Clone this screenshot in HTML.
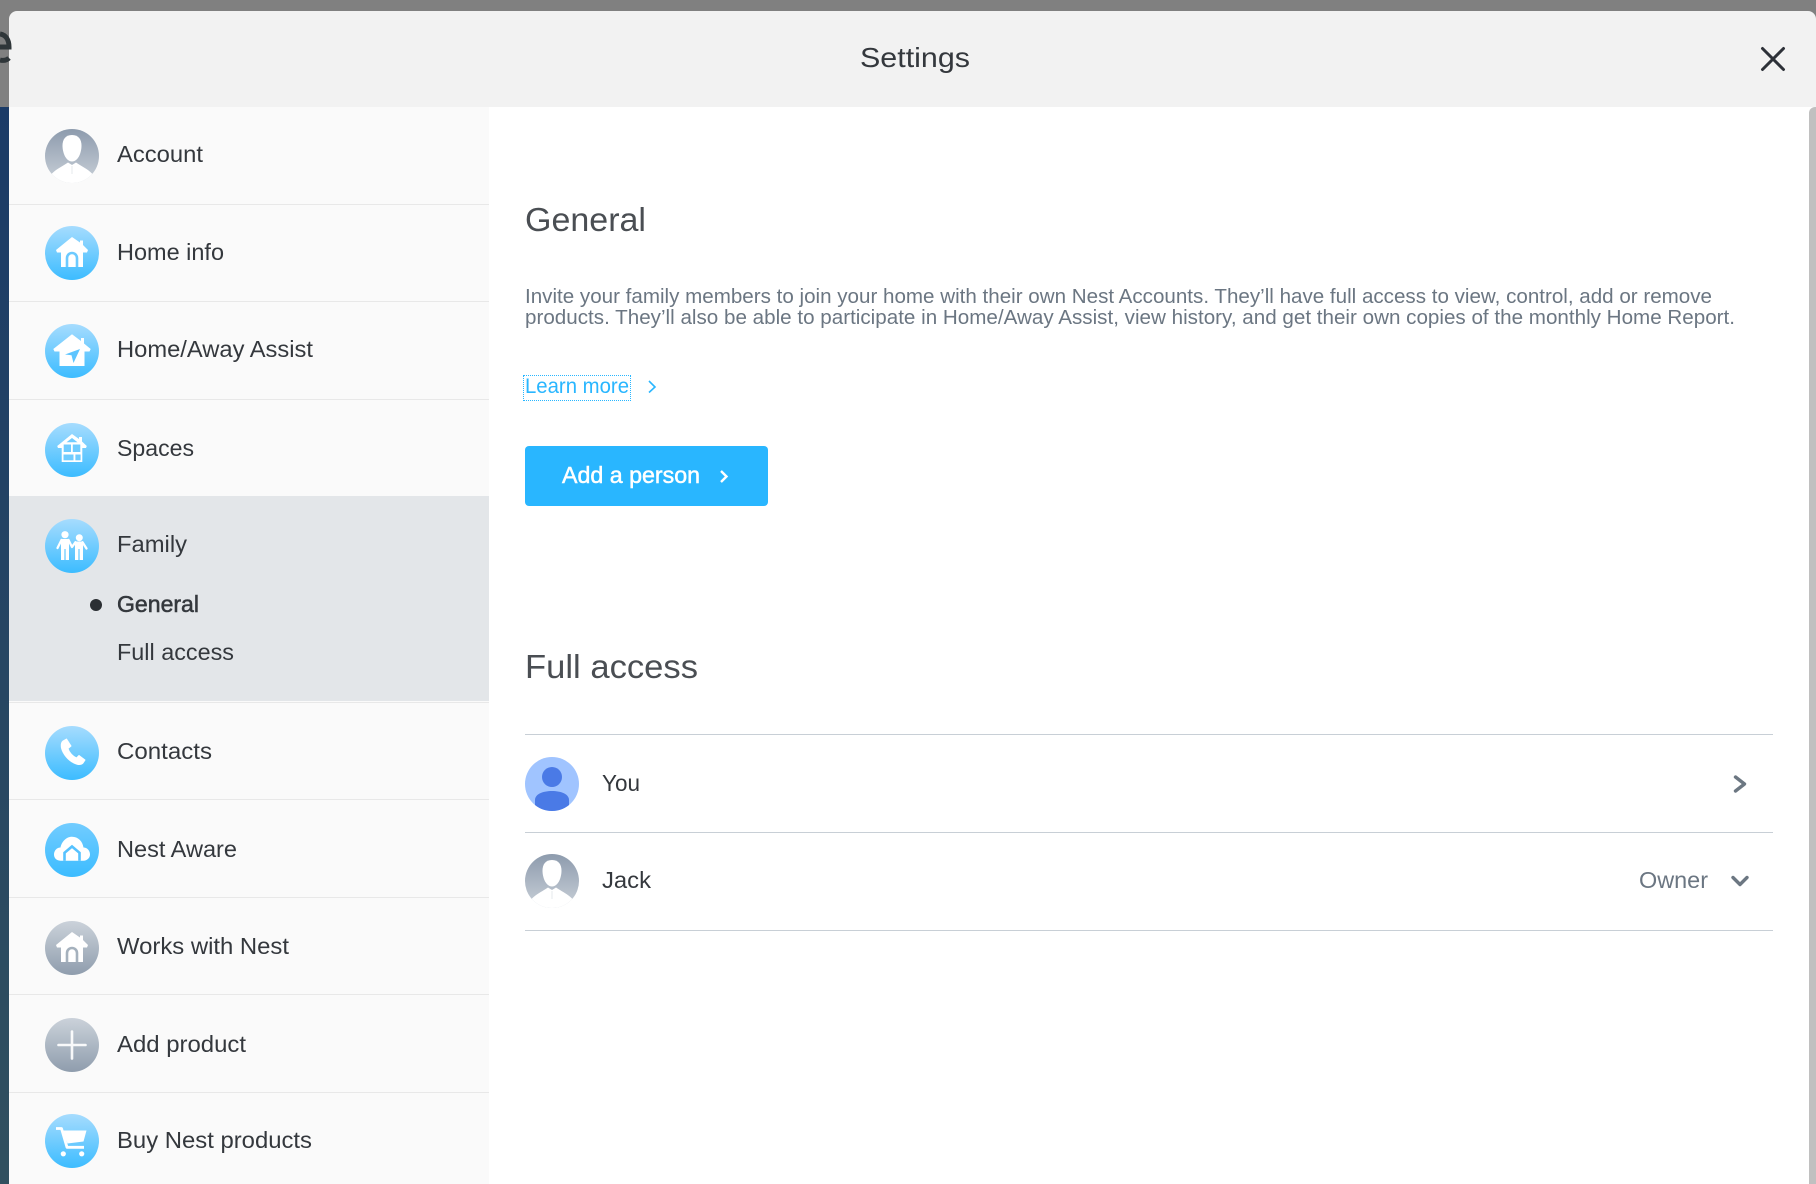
<!DOCTYPE html>
<html lang="en">
<head>
<meta charset="utf-8">
<title>Settings</title>
<style>
html,body{margin:0;padding:0;width:1816px;height:1184px;overflow:hidden;background:#808080}
#stage{position:absolute;left:0;top:0;width:1816px;height:1184px;overflow:hidden}
.abs{position:absolute}
svg text{font-family:"Liberation Sans",sans-serif}
</style>
</head>
<body>
<div id="stage">
  <div class="abs" style="left:0;top:107px;width:9px;height:1077px;background:linear-gradient(#1b3b67,#31505f)"></div>
  <div class="abs" style="left:9px;top:11px;width:1807px;height:96px;background:#f2f2f2;border-radius:8px 8px 0 0"></div>
  <div class="abs" style="left:9px;top:107px;width:1807px;height:1077px;background:#fff"></div>
  <div class="abs" style="left:9px;top:107px;width:480px;height:1077px;background:#fafafa"></div>
  <div class="abs" style="left:9px;top:496px;width:480px;height:205px;background:#e3e6e9"></div>
  <div class="abs" style="left:9px;top:204px;width:480px;height:1px;background:#e8e8e8"></div>
  <div class="abs" style="left:9px;top:301px;width:480px;height:1px;background:#e8e8e8"></div>
  <div class="abs" style="left:9px;top:399px;width:480px;height:1px;background:#e8e8e8"></div>
  <div class="abs" style="left:9px;top:702px;width:480px;height:1px;background:#e8e8e8"></div>
  <div class="abs" style="left:9px;top:799px;width:480px;height:1px;background:#e8e8e8"></div>
  <div class="abs" style="left:9px;top:897px;width:480px;height:1px;background:#e8e8e8"></div>
  <div class="abs" style="left:9px;top:994px;width:480px;height:1px;background:#e8e8e8"></div>
  <div class="abs" style="left:9px;top:1092px;width:480px;height:1px;background:#e8e8e8"></div>
  <div class="abs" style="left:1809px;top:107px;width:7px;height:1077px;background:#c0c0c0;border-radius:6px 0 0 0"></div>
  <div class="abs" style="left:525px;top:734px;width:1248px;height:1px;background:#c8cfd6"></div>
  <div class="abs" style="left:525px;top:832px;width:1248px;height:1px;background:#c8cfd6"></div>
  <div class="abs" style="left:525px;top:930px;width:1248px;height:1px;background:#c8cfd6"></div>
  <div class="abs" style="left:525px;top:446px;width:243px;height:60px;background:#29b6ff;border-radius:4px"></div>
  <div class="abs" style="left:523px;top:375px;width:106px;height:24px;border:1px dotted #29b6ff"></div>

  <svg class="abs" style="left:0;top:0" width="1816" height="1184" viewBox="0 0 1816 1184">
    <defs>
      <linearGradient id="blue" x1="0" y1="0" x2="0" y2="1"><stop offset="0" stop-color="#a6dcfe"/><stop offset="1" stop-color="#3cbcff"/></linearGradient>
      <linearGradient id="blue2" x1="0" y1="0" x2="0" y2="1"><stop offset="0" stop-color="#72ccff"/><stop offset="1" stop-color="#3cbcff"/></linearGradient>
      <linearGradient id="gray" x1="0" y1="0" x2="0" y2="1"><stop offset="0" stop-color="#cbd2da"/><stop offset="1" stop-color="#8f9dad"/></linearGradient>
      <linearGradient id="ava" x1="0" y1="0" x2="0" y2="1"><stop offset="0" stop-color="#8d9bad"/><stop offset="1" stop-color="#c9d0d8"/></linearGradient>
      <clipPath id="c27"><circle cx="0" cy="0" r="27"/></clipPath>
      <g id="person">
        <circle r="27" fill="url(#ava)"/>
        <g clip-path="url(#c27)">
          <path d="M0,-21 C6.500,-21 9.500,-16.500 9.500,-10.500 C9.500,-3 6,5.500 0,5.500 C-6,5.500 -9.500,-3 -9.500,-10.500 C-9.500,-16.500 -6.500,-21 0,-21 Z" fill="#fff"/>
          <path d="M-30,30 L-20,17.500 C-15,12.500 -9,10 -4,6.500 L0,9 L4,6.500 C9,10 15,12.500 20,17.500 L30,30 Z" fill="#fff"/>
          <path d="M0,10 V18" stroke="#dfe3e7" stroke-width=".8"/>
        </g>
      </g>
      <g id="home">
        <path d="M0,-16 L8,-10.500 V-12.500 H11 V-8 L16,-3 L15,-.5 H11 V14 H-11 V-.5 H-15 L-16,-3 Z" fill="#fff"/>
      </g>
    </defs>

    <!-- background glyph -->
    <path d="M0,34 C6,35 9,40 9,47 H0 M0,60 C4,61 7,60 9,58" fill="none" stroke="#2f3639" stroke-width="5"/>

    <!-- sidebar icons -->
    <use href="#person" x="72" y="156"/>

    <g transform="translate(72 253)">
      <circle r="27" fill="url(#blue)"/>
      <use href="#home"/>
      <path d="M-5,14 V5 A5,5 0 0 1 5,5 V14" fill="none" stroke="#6ccaff" stroke-width="2.600"/>
    </g>

    <g transform="translate(72 351)">
      <circle r="27" fill="url(#blue)"/>
      <path d="M0,-16.700 L9,-10 V-13 H12 V-7.500 L18.700,-2 L17.500,.5 H12.500 V15 H-12.500 V.5 H-17.500 L-18.700,-2 Z" fill="#fff"/>
      <path d="M8,-2 L-7,3.500 L-.5,4.300 L1.500,12 Z" fill="#5ec5ff"/>
    </g>

    <g transform="translate(72 450)">
      <circle r="27" fill="url(#blue)"/>
      <path d="M0,-16 L7,-11 V-13 H10 V-8.500 L14.800,-4 L14,-2 H10.300 V12 H-10.300 V-2 H-14 L-14.800,-4 Z" fill="#fff"/>
      <g fill="#70ccff">
        <path d="M0,-12 L5.500,-7.800 H-5.500 Z"/>
        <rect x="-8.300" y="-5.500" width="7.300" height="7.500"/>
        <rect x=".8" y="-5.500" width="7.500" height="7.500"/>
        <rect x="-8.500" y="4.500" width="10" height="5.800"/>
        <rect x="3.400" y="4.500" width="5.200" height="5.800"/>
      </g>
    </g>

    <g transform="translate(72 546)" fill="#fff">
      <circle r="27" fill="url(#blue)"/>
      <circle cx="-7" cy="-11.300" r="3.600"/>
      <circle cx="7.300" cy="-8.300" r="3.500"/>
      <path d="M-9.500,-7 H-4.500 Q-3,-7 -3,-5.500 V3 H-11 V-5.500 Q-11,-7 -9.500,-7 Z"/>
      <path d="M-11,2 H-7.600 V14 H-11 Z M-6.400,2 H-3 V14 H-6.400 Z"/>
      <path d="M4.500,-4.500 H9.500 Q11,-4.500 11,-3 V3 H3 V-3 Q3,-4.500 4.500,-4.500 Z"/>
      <path d="M3,2 H6.400 V14 H3 Z M7.600,2 H11 V14 H7.600 Z"/>
      <path d="M-10.500,-6 L-14.500,2 M-3.500,-6 L0,1 L3.500,-3.800 M10.500,-3.800 L14.500,2.500" fill="none" stroke="#fff" stroke-width="2.300" stroke-linecap="round" stroke-linejoin="round"/>
    </g>

    <g transform="translate(72 753)">
      <circle r="27" fill="url(#blue)"/>
      <path d="M-9,-12 L-5.500,-14 L-1,-7 L-4,-4.500 C-3,-.5 1,3.500 4.500,5 L7,2.500 L13,7 L11,10 C9,12 6,12 2,10 C-4,7 -9,1 -10.500,-5 C-11,-8 -11,-10.500 -9,-12 Z" fill="#fff" stroke="#fff" stroke-linejoin="round"/>
    </g>

    <g transform="translate(72 850)">
      <circle r="27" fill="url(#blue2)"/>
      <path d="M-11.500,10.700 C-16,10.700 -18,7.500 -18,4.500 C-18,.5 -15,-2.500 -11.500,-2.500 C-10.500,-8 -6,-13.300 0,-13.300 C6,-13.300 10.500,-9 11.500,-2.500 C15,-2.500 18,.5 18,4.500 C18,8 15,10.700 11.500,10.700 Z" fill="#fff"/>
      <path d="M-7.500,10.700 V2.800 L0,-3.500 L7.500,2.800 V10.700" fill="none" stroke="#56c2ff" stroke-width="2.600"/>
    </g>

    <g transform="translate(72 948)">
      <circle r="27" fill="url(#gray)"/>
      <use href="#home"/>
      <path d="M-5,14 V5 A5,5 0 0 1 5,5 V14" fill="none" stroke="#a5b1bd" stroke-width="2.600"/>
    </g>

    <g transform="translate(72 1045)">
      <circle r="27" fill="url(#gray)"/>
      <path d="M-13.500,0 H13.500 M0,-13.500 V13.500" stroke="#fff" stroke-width="2.600" stroke-linecap="round" opacity=".92"/>
    </g>

    <g transform="translate(72 1141)">
      <circle r="27" fill="url(#blue)"/>
      <path d="M-9.500,-10.500 H14.500 L11.500,0.500 L-4.500,2.500 Z" fill="#fff"/>
      <path d="M-16,-12.500 H-10.500 L-5,6.300 H12" fill="none" stroke="#fff" stroke-width="2.800" stroke-linejoin="round"/>
      <circle cx="-8.700" cy="12.800" r="2.600" fill="#fff"/>
      <circle cx="9.700" cy="12.800" r="2.600" fill="#fff"/>
    </g>

    <circle cx="96" cy="605" r="6" fill="#2b2f33"/>

    <!-- close -->
    <path d="M1762.500,48.500 L1783.500,69.500 M1783.500,48.500 L1762.500,69.500" stroke="#2d3138" stroke-width="3" stroke-linecap="round"/>

    <!-- chevrons -->
    <path d="M649,381 L655,387 L649,392.500" fill="none" stroke="#29b6ff" stroke-width="1.600"/>
    <path d="M721,471 L726.500,476.500 L721,482" fill="none" stroke="#fff" stroke-width="2.400"/>
    <path d="M1735.500,777 L1744.500,784 L1735.500,791" fill="none" stroke="#6c7782" stroke-width="3.400" stroke-linecap="round" stroke-linejoin="round"/>
    <path d="M1733,877.500 L1740,884.500 L1747,877.500" fill="none" stroke="#6c7782" stroke-width="3.400" stroke-linecap="round" stroke-linejoin="round"/>

    <!-- avatars -->
    <g transform="translate(552 784)">
      <circle r="27" fill="#a0c4ff"/>
      <circle cx="0" cy="-7" r="10" fill="#4a7ae6"/>
      <g clip-path="url(#c27)"><path d="M-17,30 V16 C-17,10 -9,7 0,7 C9,7 17,10 17,16 V30 Z" fill="#4a7ae6"/></g>
    </g>
    <use href="#person" x="552" y="881"/>

    <!-- text -->
    <g font-size="23.500" fill="#34383d">
      <text x="117" y="162" textLength="86" lengthAdjust="spacingAndGlyphs">Account</text>
      <text x="117" y="260" textLength="107" lengthAdjust="spacingAndGlyphs">Home info</text>
      <text x="117" y="357" textLength="196" lengthAdjust="spacingAndGlyphs">Home/Away Assist</text>
      <text x="117" y="456" textLength="77" lengthAdjust="spacingAndGlyphs">Spaces</text>
      <text x="117" y="552" textLength="70" lengthAdjust="spacingAndGlyphs">Family</text>
      <text x="117" y="612" textLength="82" lengthAdjust="spacingAndGlyphs" stroke="#34383d" stroke-width=".55">General</text>
      <text x="117" y="660" textLength="117" lengthAdjust="spacingAndGlyphs">Full access</text>
      <text x="117" y="759" textLength="95" lengthAdjust="spacingAndGlyphs">Contacts</text>
      <text x="117" y="857" textLength="120" lengthAdjust="spacingAndGlyphs">Nest Aware</text>
      <text x="117" y="954" textLength="172" lengthAdjust="spacingAndGlyphs">Works with Nest</text>
      <text x="117" y="1052" textLength="129" lengthAdjust="spacingAndGlyphs">Add product</text>
      <text x="117" y="1148" textLength="195" lengthAdjust="spacingAndGlyphs">Buy Nest products</text>
    </g>

    <text x="860" y="67" font-size="27.500" fill="#34383d" textLength="110" lengthAdjust="spacingAndGlyphs">Settings</text>

    <text x="525" y="231" font-size="33.500" fill="#4a4e53" textLength="121" lengthAdjust="spacingAndGlyphs">General</text>
    <text x="525" y="678" font-size="33.500" fill="#4a4e53" textLength="173" lengthAdjust="spacingAndGlyphs">Full access</text>

    <g font-size="20.500" fill="#6b7682">
      <text x="525" y="303" textLength="1187" lengthAdjust="spacingAndGlyphs">Invite your family members to join your home with their own Nest Accounts. They’ll have full access to view, control, add or remove</text>
      <text x="525" y="324" textLength="1210" lengthAdjust="spacingAndGlyphs">products. They’ll also be able to participate in Home/Away Assist, view history, and get their own copies of the monthly Home Report.</text>
    </g>

    <text x="525" y="393" font-size="21" fill="#29b6ff" textLength="104" lengthAdjust="spacingAndGlyphs">Learn more</text>
    <text x="562" y="483" font-size="23.500" fill="#fff" stroke="#fff" stroke-width=".5" textLength="138" lengthAdjust="spacingAndGlyphs">Add a person</text>

    <g font-size="23.500" fill="#34383d">
      <text x="602" y="791" textLength="38" lengthAdjust="spacingAndGlyphs">You</text>
      <text x="602" y="888" textLength="49" lengthAdjust="spacingAndGlyphs">Jack</text>
    </g>
    <text x="1639" y="888" font-size="23" fill="#6b7682" textLength="69" lengthAdjust="spacingAndGlyphs">Owner</text>
  </svg>
</div>
</body>
</html>
